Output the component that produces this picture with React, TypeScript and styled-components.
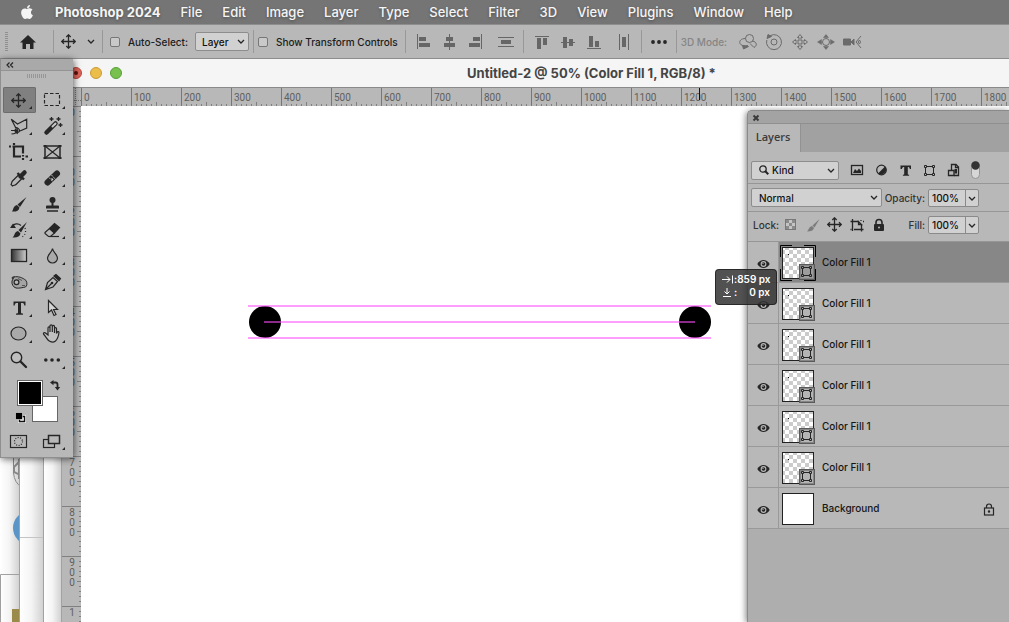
import React from "react";
import styled, { createGlobalStyle, css } from "styled-components";
import { FaApple } from "react-icons/fa";

const ink = "#262626";
const panel = "#b8b8b8";
const line = "#999999";

const GlobalStyle = createGlobalStyle`
  *, *::before, *::after { box-sizing: border-box; }
  body { margin: 0; background: #ffffff; }
  body, button, input, select { font-family: Inter, "Liberation Sans", sans-serif; }
  button { padding: 0; border: 0; background: none; color: inherit; }
  svg { display: block; overflow: visible; }
`;

const Shell = styled.div`
  height: 100vh;
  display: flex;
  flex-direction: column;
  overflow: hidden;
  color: ${ink};
  font-size: 10px;
  font-weight: 500;
`;

/* ---------- system menu bar ---------- */

const MenuBar = styled.nav`
  flex: none;
  height: 24px;
  display: flex;
  align-items: center;
  gap: 20px;
  padding-left: 19px;
  background: #757575;
  color: #f5f5f5;
  white-space: nowrap;
  overflow: hidden;
`;

const MenuItem = styled.button<{ $app?: boolean }>`
  flex: none;
  font-size: 13px;
  line-height: 20px;
  font-weight: ${(p) => (p.$app ? 700 : 500)};
  text-shadow: 0 1px 3px rgba(0, 0, 0, 0.35);
`;

/* ---------- options bar ---------- */

const OptionsBar = styled.div`
  flex: none;
  height: 35px;
  display: flex;
  align-items: center;
  padding-left: 5px;
  background: ${panel};
  border-top: 1px solid #8e8e8e;
  border-bottom: 1px solid #8c8c8c;
  white-space: nowrap;
  overflow: hidden;
`;

const BarGrip = styled.span`
  flex: none;
  width: 3px;
  height: 19px;
  background: repeating-linear-gradient(#8f8f8f 0 1px, transparent 1px 2px);
`;

const Separator = styled.span`
  flex: none;
  width: 1px;
  height: 23px;
  background: #989898;
`;

const IconButton = styled.button<{ $w: number; $tone?: string; $end?: number }>`
  flex: none;
  width: ${(p) => p.$w}px;
  height: 26px;
  padding-right: ${(p) => p.$end || 0}px;
  display: flex;
  align-items: center;
  justify-content: center;
  color: ${(p) => p.$tone || ink};
`;

const IconGroup = styled.div`
  display: flex;
  padding-left: 5px;
`;

const CheckLabel = styled.label<{ $left: number }>`
  flex: none;
  display: flex;
  align-items: center;
  gap: 8px;
  padding: 0 7px 0 ${(p) => p.$left}px;
  color: #1c1c1c;
`;

const CheckBox = styled.input`
  appearance: none;
  width: 10px;
  height: 10px;
  margin: 0;
  border: 1px solid #777777;
  border-radius: 2px;
  background: #c9c9c9;
`;

const DimLabel = styled.span`
  width: 58px;
  padding-left: 4px;
  color: #858585;
`;

const SelectWrap = styled.span<{ $w: number; $gap?: number }>`
  flex: none;
  width: ${(p) => p.$w}px;
  margin-right: ${(p) => p.$gap || 0}px;
  display: grid;
  align-items: center;
  > * { grid-area: 1 / 1; }
  > svg { justify-self: end; margin-right: 4px; pointer-events: none; }
  > svg.lead { justify-self: start; margin-left: 8px; }
`;

const Select = styled.select<{ $pad: number }>`
  appearance: none;
  width: 100%;
  height: 19px;
  padding: 0 0 0 ${(p) => p.$pad}px;
  border: 1px solid #8d8d8d;
  border-radius: 2px;
  background: #d1d1d1;
  color: #111111;
  font-size: 10px;
  font-weight: 500;
`;

/* ---------- workspace ---------- */

const Workspace = styled.main`
  flex: 1;
  min-height: 0;
  display: flex;
  position: relative;
`;

const BackWindow = styled.div<{ $w: number }>`
  flex: none;
  width: ${(p) => p.$w}px;
  overflow: hidden;
  border-right: 1px solid #a2a2a2;
  background: linear-gradient(to right, #ffffff, #f4f4f4 50%, #d2d2d2);
`;

const BackRule = styled.hr`
  margin: 478px 0 0;
  border: 0;
  border-top: 1px solid #c4c4c4;
`;

const DocumentWindow = styled.section`
  flex: 1;
  min-width: 0;
  display: flex;
  flex-direction: column;
`;

const TitleBar = styled.header`
  flex: none;
  height: 28px;
  display: flex;
  align-items: center;
  gap: 8px;
  padding-left: 8px;
  background: #f5f5f5;
`;

const Light = styled.button<{ $c: string; $edge: string }>`
  width: 12px;
  height: 12px;
  border-radius: 50%;
  border: 1px solid ${(p) => p.$edge};
  background: ${(p) => p.$c};
`;

const Title = styled.h1`
  flex: 1;
  margin: 0;
  padding-left: 44px;
  text-align: center;
  font-size: 13px;
  line-height: 20px;
  font-weight: 700;
  color: #444444;
  white-space: nowrap;
`;

const RulerRow = styled.div`
  flex: none;
  height: 19px;
  display: flex;
  overflow: hidden;
  border-top: 1px solid #8a8a8a;
  background: ${panel};
`;

const RulerCorner = styled.div`
  flex: none;
  width: 19px;
  background:
    repeating-linear-gradient(#777777 0 1px, transparent 1px 2px) 13px 0 / 1px 100% no-repeat,
    repeating-linear-gradient(to right, #777777 0 1px, transparent 1px 2px) 0 12px / 100% 1px no-repeat;
`;

const rulerText = css`
  font-family: Roboto, "Liberation Sans", sans-serif;
  font-size: 10px;
  font-weight: 400;
  color: #5f5f5f;
`;

const HRuler = styled.div`
  flex: 1;
  display: flex;
  position: relative;
  overflow: hidden;
  background:
    linear-gradient(to right, #777777 1px, transparent 1px) 0 0 / 50px 100% repeat-x,
    linear-gradient(to right, #808080 1px, transparent 1px) 0 100% / 5px 2px repeat-x,
    linear-gradient(to right, #808080 1px, transparent 1px) 0 100% / 25px 4px repeat-x;
`;

const HMark = styled.span`
  flex: none;
  width: 50px;
  padding: 4px 0 0 3px;
  line-height: 12px;
  ${rulerText}
`;

const CursorMark = styled.span`
  position: absolute;
  left: 618px;
  top: 0;
  width: 1px;
  height: 12px;
  background: #111111;
`;

const DocBody = styled.div`
  flex: 1;
  min-height: 0;
  display: flex;
`;

const VRuler = styled.div`
  flex: none;
  width: 19px;
  overflow: hidden;
  background:
    linear-gradient(#808080 1px, transparent 1px) 0 0 / 100% 50px repeat-y,
    linear-gradient(#808080 1px, transparent 1px) 100% 0 / 2px 5px repeat-y,
    linear-gradient(#808080 1px, transparent 1px) 100% 0 / 4px 25px repeat-y,
    ${panel};
`;

const VMark = styled.div`
  height: 50px;
  padding: 2px 0 0 1px;
  display: flex;
  flex-direction: column;
  align-items: center;
  line-height: 10px;
  ${rulerText}
`;

const Canvas = styled.div`
  flex: 1;
  position: relative;
  background: #ffffff;
`;

const Artwork = styled.svg`
  position: absolute;
  left: 167px;
  top: 199px;
`;

/* ---------- tools palette ---------- */

const Tools = styled.aside`
  position: absolute;
  left: 0;
  top: 0;
  width: 73px;
  background: ${panel};
  border-left: 1px solid #8f8f8f;
  border-bottom: 1px solid #8f8f8f;
  box-shadow: 1px 1px 7px rgba(0, 0, 0, 0.6);
`;

const ToolsHead = styled.div`
  height: 12px;
  display: flex;
  align-items: center;
  padding-left: 5px;
  background: #a9a9a9;
  border-bottom: 1px solid #939393;
`;

const ToolsGrip = styled.div`
  width: 20px;
  height: 4px;
  margin: 3px 0 9px 26px;
  background: repeating-linear-gradient(to right, #969696 0 1px, transparent 1px 2px);
`;

const ToolGrid = styled.div`
  display: grid;
  grid-template-columns: 33px 33px;
  padding-left: 2px;
`;

const Tool = styled.button<{ $on?: boolean; $more?: boolean }>`
  position: relative;
  height: 26px;
  display: flex;
  align-items: center;
  justify-content: center;
  border-radius: 2px;
  ${(p) => p.$on && css`background: #808080; box-shadow: inset 0 0 0 1px #6c6c6c;`}
  ${(p) =>
    p.$more &&
    css`
      &::after {
        content: "";
        position: absolute;
        right: 4px;
        bottom: 4px;
        border-bottom: 3px solid ${ink};
        border-left: 3px solid transparent;
      }
    `}
`;

const Swatches = styled.div`
  position: relative;
  height: 55px;
`;

const Swatch = styled.button<{ $c: string; $x: number; $y: number }>`
  position: absolute;
  left: ${(p) => p.$x}px;
  top: ${(p) => p.$y}px;
  width: 26px;
  height: 26px;
  border: 1px solid #666666;
  background: ${(p) => p.$c};
  box-shadow: inset 0 0 0 1px #ffffff;
`;

const SwatchIcon = styled.button<{ $x: number; $y: number }>`
  position: absolute;
  left: ${(p) => p.$x}px;
  top: ${(p) => p.$y}px;
`;

const ModeRow = styled(ToolGrid)`
  padding-bottom: 3px;
`;

/* ---------- layers palette ---------- */

const Layers = styled.aside`
  position: absolute;
  right: 0;
  top: 51px;
  bottom: 0;
  width: 262px;
  display: flex;
  flex-direction: column;
  background: #aeaeae;
  border-left: 1px solid #8a8a8a;
  border-top: 1px solid #8a8a8a;
  border-top-left-radius: 5px;
  box-shadow: -1px 1px 6px rgba(0, 0, 0, 0.5);
`;

const LayersHead = styled.div`
  flex: none;
  height: 13px;
  display: flex;
  align-items: center;
  padding: 1px 0 0 5px;
  background: #a3a3a3;
  border-bottom: 1px solid #8f8f8f;
  border-top-left-radius: 4px;
`;

const TabStrip = styled.div`
  flex: none;
  height: 28px;
  display: flex;
  background: #a1a1a1;
`;

const Tab = styled.button`
  width: 53px;
  padding: 0 2px 4px 0;
  border-right: 1px solid #929292;
  background: ${panel};
  font-family: "Open Sans", sans-serif;
  font-size: 11px;
  font-weight: 600;
  color: #3c3c3c;
`;

const PanelRow = styled.div<{ $h: number; $top?: number; $bottom?: number }>`
  flex: none;
  height: ${(p) => p.$h}px;
  display: flex;
  align-items: center;
  padding: ${(p) => p.$top || 0}px 30px ${(p) => p.$bottom || 0}px 3px;
  background: ${panel};
  border-bottom: 1px solid #969696;
`;

const IconStrip = styled.div<{ $left: number }>`
  display: flex;
  padding-left: ${(p) => p.$left}px;
`;

const Toggle = styled.button`
  width: 9px;
  height: 18px;
  margin-left: 6px;
  border-radius: 5px;
  border: 1px solid #949494;
  background: #d6d6d6;
  display: flex;
  justify-content: center;
  svg { flex: none; }
`;

const LockLabel = styled.span`
  width: 29px;
  padding-left: 2px;
  color: #333333;
`;

const Percent = styled.label`
  margin-left: auto;
  display: flex;
  align-items: center;
  gap: 3px;
  color: #333333;
`;

const PercentBox = styled.span`
  display: flex;
  width: 51px;
  height: 18px;
  border: 1px solid #8a8a8a;
  border-radius: 2px;
  background: #d1d1d1;
  input {
    width: 37px;
    padding: 0 0 0 3px;
    border: 0;
    border-right: 1px solid #8a8a8a;
    background: none;
    color: #111111;
    font-size: 10px;
    font-weight: 500;
  }
  svg { margin: 6px 0 0 2px; }
`;

const LayerList = styled.ul`
  flex: none;
  list-style: none;
  margin: 0;
  padding: 0;
`;

const LayerItem = styled.li<{ $on?: boolean }>`
  height: 41px;
  display: flex;
  align-items: center;
  border-bottom: 1px solid ${line};
  background: ${(p) => (p.$on ? "#878787" : panel)};
`;

const Eye = styled.button`
  width: 31px;
  height: 100%;
  padding-top: 3px;
  display: flex;
  align-items: center;
  justify-content: center;
  border-right: 1px solid ${line};
  background: ${panel};
`;

const LayerName = styled.span`
  flex: 1;
  padding-left: 7px;
  line-height: 14px;
  color: #151515;
`;

const LockSlot = styled.span`
  padding: 3px 14px 0 0;
`;

const Thumb = styled.svg`
  margin: 2px 0 0 2px;
`;

/* ---------- drag read-out ---------- */

const Readout = styled.div`
  position: absolute;
  left: 715px;
  top: 210px;
  width: 62px;
  padding: 3px 6px 5px 6px;
  border-radius: 4px;
  border: 1px solid rgba(25, 25, 25, 0.7);
  background: rgba(50, 50, 50, 0.85);
  color: #ffffff;
  line-height: 13px;
  font-weight: 600;
`;

const ReadoutLine = styled.div`
  display: flex;
  align-items: center;
  white-space: nowrap;
  span { margin-left: auto; }
`;

/* ---------- icons ---------- */

const Chevron = () => (
  <svg width="8" height="5" viewBox="0 0 8 5" fill="none" stroke={ink} strokeWidth="1.3">
    <path d="M1 1l3 3 3-3" />
  </svg>
);

const MovePath = () => (
  <g fill="none" stroke="currentColor" strokeWidth="1.3">
    <path d="M7.5 .8V14.2M.8 7.5H14.2" />
    <path d="M5.3 3L7.5 .8 9.7 3M5.3 12L7.5 14.2 9.7 12M3 5.3L.8 7.5 3 9.7M12 5.3L14.2 7.5 12 9.7" />
  </g>
);

const Frame = () => (
  <g fill="none" stroke={ink}>
    <path d="M2.5 4v5M10.5 4v5M4 2.5h5M4 10.5h5" />
    <path d="M1.5 1.5h2v2h-2zM9.5 1.5h2v2h-2zM1.5 9.5h2v2h-2zM9.5 9.5h2v2h-2z" />
  </g>
);

type IconDef = { label: string; w?: number; art: React.ReactNode };

const alignH: IconDef[] = [
  { label: "Align left edges", art: <><path d="M1.5 0v15" /><path d="M3 5h7M3 11h11" strokeWidth="4" /></> },
  { label: "Align horizontal centers", art: <><path d="M7.5 0v16" /><path d="M4 5h7M2 11h11" strokeWidth="4" /></> },
  { label: "Align right edges", art: <><path d="M13.5 0v15" /><path d="M5 5h7M1 11h11" strokeWidth="4" /></> },
  { label: "Distribute vertically", w: 34, art: <><path d="M0 3.5h16M0 12.5h16" /><path d="M3 8h10" strokeWidth="4" /></> },
];

const alignV: IconDef[] = [
  { label: "Align top edges", art: <><path d="M1 2.5h14" /><path d="M5 4v11M11 4v7" strokeWidth="4" /></> },
  { label: "Align vertical centers", art: <><path d="M1 8.5h14" /><path d="M5 3v11M11 5v7" strokeWidth="4" /></> },
  { label: "Align bottom edges", art: <><path d="M1 14.5h14" /><path d="M5 2v11M11 7v6" strokeWidth="4" /></> },
  { label: "Distribute horizontally", w: 34, art: <><path d="M3.5 0v16M12.5 0v16" /><path d="M8 3v10" strokeWidth="4" /></> },
];

const modes: IconDef[] = [
  {
    label: "Orbit the 3D camera",
    art: (
      <>
        <circle cx="10.5" cy="4.5" r="4" />
        <path d="M6.500 4.500C2 4.500 0 7 1 9.500c1 2 4 3 8 2M13.500 7c4.500 1 5 4.500 1.500 6.500l-4-4" />
        <path d="M3.500 11.500l6 1-5 2.500z" fill="currentColor" />
      </>
    ),
  },
  {
    label: "Roll the 3D camera",
    art: (
      <>
        <circle cx="9" cy="8" r="3" />
        <path d="M5 1.800A7.500 7.500 0 1 1 1.800 6" />
        <path d="M2 4.500l1-4 3.500 2z" fill="currentColor" />
      </>
    ),
  },
  {
    label: "Pan the 3D camera",
    art: (
      <path d="M9 .5L6.500 3.500H8V7H4.500V5.500L1.500 8l3 2.500V9H8v3.500H6.500L9 15.500l2.500-3H10V9h3.500v1.500l3-2.500-3-2.500V7H10V3.500h1.500z" />
    ),
  },
  {
    label: "Slide the 3D camera",
    art: (
      <>
        <circle cx="9" cy="8" r="3.5" />
        <path d="M6.500 3.500h5L9 .5zM6.500 12.500h5L9 15.500zM4.500 5.500v5L.5 8zM13.500 5.500v5L17.500 8z" fill="currentColor" strokeWidth="0.5" />
      </>
    ),
  },
  {
    label: "Zoom the 3D camera",
    art: (
      <>
        <path d="M.5 5h7v6h-7zM8 8l3-3v6z" fill="currentColor" />
        <path d="M18 2l-5 6 5 6M15 8l1.500-2 1 2-1 2z" />
      </>
    ),
  },
];

type ToolDef = { label: string; more?: boolean; on?: boolean; art: React.ReactNode };

const star = (x: number, y: number) => <path d={`M${x} ${y - 2}v4M${x - 2} ${y}h4`} strokeWidth="1.3" />;

const tools: ToolDef[] = [
  { label: "Move", more: true, on: true, art: <g transform="translate(2 3)"><MovePath /></g> },
  { label: "Rectangular Marquee", more: true, art: <rect x="2.5" y="3.5" width="15" height="12" strokeDasharray="3.5 2" /> },
  {
    label: "Polygonal Lasso",
    more: true,
    art: <path d="M7 12.300L2.300 3.300 8.500 8 17.700 3.300V12L11 15M6 12c2-1 5 1 4.500 3s-4 1.500-4.500 0 1.500-2.500 3-1.500M2 14.500h7M9 14c-1 2.500-3 4-6.500 4M6.500 14.500l2 3.500" />,
  },
  {
    label: "Magic Wand",
    more: true,
    art: (
      <>
        <path d="M4.500 16.500L13.500 7.500" strokeWidth="4.5" strokeLinecap="round" />
        <path d="M10.500 10.500L13.500 7.500" stroke="#c8c8c8" strokeWidth="2" strokeLinecap="round" />
        {star(9.5, 3)}{star(16.5, 3)}{star(18.5, 9)}
      </>
    ),
  },
  { label: "Crop", more: true, art: <path d="M0 4.500h2M3.500 4.500h10.500v7M14 13v1.500M14 16v2M5 1v2M5 4.500v10h7M16.500 14.500h2.500" strokeWidth="2.2" /> },
  { label: "Frame", art: <><rect x="3" y="4" width="15" height="12" strokeWidth="1.5" /><path d="M3 4l15 12M18 4L3 16" /><path d="M1.500 4h3M16.500 4h3M1.500 16h3M16.500 16h3" strokeWidth="2" /></> },
  {
    label: "Eyedropper",
    more: true,
    art: (
      <>
        <path d="M10 6.500L3.500 13c-1 1-.5 2-1.500 3.500l1.500 1.500C5 17 6 17.500 7 16.500L13.500 10" />
        <path d="M8.500 5l6.500 6.500" strokeWidth="2.4" />
        <path d="M11.500 8.500L15.500 4.500" strokeWidth="4.5" strokeLinecap="round" />
      </>
    ),
  },
  {
    label: "Spot Healing Brush",
    more: true,
    art: (
      <>
        <path d="M5.500 14.500L15 5.500" strokeWidth="6" strokeLinecap="round" />
        <path d="M7 9.500l4.500 5M9.500 7l4.500 5" stroke="#bcbcbc" strokeWidth="1" strokeDasharray="2 1" />
        <path d="M9.500 10.500l1.500 1.500" stroke="#d0d0d0" strokeWidth="1.5" />
      </>
    ),
  },
  {
    label: "Brush",
    more: true,
    art: <path d="M17.500 3L11 13l-2.500-2.500zM8 11l2.500 2.500C10 17 6.500 18 3 17.500 4.500 16 4 12 8 11z" fill={ink} stroke="none" />,
  },
  {
    label: "Clone Stamp",
    more: true,
    art: (
      <>
        <circle cx="10.5" cy="6" r="3" fill={ink} stroke="none" />
        <path d="M9.500 8h2v3.500H16q1 0 1 1V14.500H4v-2q0-1 1-1h4.500z" fill={ink} stroke="none" />
        <path d="M5 17h11" strokeWidth="1.5" />
      </>
    ),
  },
  {
    label: "History Brush",
    more: true,
    art: (
      <>
        <path d="M18 2L12 12.500 9.500 10zM9 11l2.500 2.500C11 16.500 8 18 3.500 17.500 6 16 5 12 9 11z" fill={ink} stroke="none" />
        <path d="M3 6.500c2-3 6-3.500 9-1" />
        <path d="M1 8l3-4.500L7 8z" fill={ink} stroke="none" />
        <path d="M16 8c1.500 4 0 8-4 9.500" strokeDasharray="1 2" />
      </>
    ),
  },
  {
    label: "Eraser",
    more: true,
    art: (
      <>
        <path d="M3 12.500L7.500 8.500 12.500 13 8.500 16.500H6.500L3 13.500z" />
        <path d="M7.500 8.500L12.500 3.500 17.500 7.500 12.500 13z" fill={ink} />
        <path d="M7 16.500h10" />
      </>
    ),
  },
  { label: "Gradient", more: true, art: <rect x="2.5" y="3.5" width="15" height="12" fill="url(#toolGradient)" strokeWidth="1.3" /> },
  { label: "Blur", more: true, art: <path d="M10.500 2.500C10 6 5.500 9 5.500 12a5 5 0 0 0 10 0C15.500 9 11 6 10.500 2.500z" fill="#aaaaaa" /> },
  {
    label: "Dodge",
    more: true,
    art: (
      <>
        <path d="M5 5C9 4 13.500 5.500 17 8.500c1.500 2.500 1 5.500-.5 6.500-3 .5-6 1.500-9.500 1C4 15 2.500 12 3 9z" fill="#a4a4a4" strokeWidth="1" />
        <path d="M3.500 7l-.5-1.500 2.500-1" strokeWidth="1" />
        <circle cx="7.5" cy="10.3" r="2.4" fill={panel} />
        <path d="M9 6.500l4 2M13 13.500h3" strokeWidth="1" stroke="#555555" />
      </>
    ),
  },
  {
    label: "Pen",
    more: true,
    art: (
      <>
        <path d="M3.500 17.500L5.500 10.500 11 5.500 15.500 9.500 11 15zM3.500 17.500L9.500 11.500" />
        <circle cx="10" cy="11" r="1.3" fill={ink} stroke="none" />
        <path d="M12 4L14 2.500 18.500 6.500 17 8.500z" fill={ink} />
      </>
    ),
  },
  {
    label: "Type",
    more: true,
    art: <path d="M4.500 3.500h12v4H15.300C15 5.500 14.500 5 13 5h-1v9.500c0 .7.5 1 2 1.100v1.200H7v-1.200c1.500-.1 2-.4 2-1.100V5H8C6.500 5 6 5.500 5.700 7.500H4.500z" fill={ink} stroke="none" />,
  },
  { label: "Path Selection", more: true, art: <path d="M6.500 2.500V14.500L9.500 12l2.500 5.500 2-1L11.500 11.500H15.500z" fill="#d4d4d4" /> },
  { label: "Ellipse", more: true, art: <ellipse cx="9.5" cy="9.5" rx="7.5" ry="6.5" fill="#a9a9a9" /> },
  {
    label: "Hand",
    more: true,
    art: (
      <path
        d="M6.500 16.500C4 14 3 11.500 1.500 10c-.5-1 1-1.800 2-1l2.500 2V4c0-1.500 2-1.500 2 0v4V2c0-1.500 2.300-1.500 2.300 0v6V2.500c0-1.400 2.200-1.400 2.200 0V9 4.500c0-1.300 2-1.300 2 0V9.500c.5-2 2.500-2.500 2.500-1-.5 4-1 6-3.500 8.500C11.500 18.500 8.500 18 6.500 16.500z"
        fill="#c0c0c0"
      />
    ),
  },
  { label: "Zoom", art: <><circle cx="7.5" cy="7.5" r="5.2" fill="#bfbfbf" strokeWidth="1.4" /><path d="M11.500 11.500L17 17" strokeWidth="2.4" strokeLinecap="round" /></> },
  {
    label: "Edit Toolbar",
    more: true,
    art: <g fill={ink} stroke="none"><circle cx="3.8" cy="10" r="1.8" /><circle cx="10" cy="10" r="1.8" /><circle cx="16.3" cy="10" r="1.8" /></g>,
  },
];

const ToolArt = ({ children }: { children: React.ReactNode }) => (
  <svg width="21" height="20" viewBox="0 0 21 20" fill="none" stroke={ink} strokeWidth="1.2">
    {children}
  </svg>
);

const filters: IconDef[] = [
  {
    label: "Pixel layers",
    art: <><rect x="1.5" y="2.5" width="11" height="9" stroke={ink} strokeWidth="1.3" fill="none" /><path d="M3 10l2-4L7 8l2-2.500L11 8v2z" fill={ink} /></>,
  },
  {
    label: "Adjustment layers",
    art: <><circle cx="7.5" cy="7" r="4.8" fill="none" stroke={ink} strokeWidth="1.2" /><path d="M11 3.500A5 5 0 0 1 4 10.500z" fill={ink} /></>,
  },
  {
    label: "Type layers",
    art: <path d="M2.500 2.500H13v3.500h-1.200c-.2-1.500-.6-2-2-2v7c0 .5.4.7 1.300.8v.9H4.900v-.9c.9-.1 1.300-.3 1.300-.8V4c-1.400 0-2 .5-2.300 2H2.500z" fill={ink} />,
  },
  { label: "Shape layers", art: <g transform="translate(1 1)"><Frame /></g> },
  {
    label: "Smart objects",
    art: (
      <g fill="none" stroke={ink} strokeWidth="1.3">
        <path d="M5.500 7V1.500H10L12.500 4v8.500H8" />
        <path d="M2.500 7.500h5.500v5H2.500z" />
        <path d="M9.500 1.500V4.500h3" />
        <path d="M8.500 6h2.500v4.500H8.500z" fill={ink} stroke="none" />
      </g>
    ),
  },
];

const locks: IconDef[] = [
  {
    label: "Lock transparent pixels",
    art: <><rect x="1.5" y="1.5" width="10" height="10" fill="#c4c4c4" stroke="#777777" /><path d="M2 2h3v3H2zM8 2h3v3H8zM5 5h3v3H5zM2 8h3v3H2zM8 8h3v3H8z" fill="#8b8b8b" /></>,
  },
  {
    label: "Lock image pixels",
    art: <path d="M13.500 1L8.500 9.500 6.500 7.500zM6 8l2 2c-.5 2.500-3 3.500-7 3.500C3 12 2.500 9 6 8z" fill="#7b7b7b" />,
  },
  { label: "Lock position", art: <g transform="translate(-1 -1)"><MovePath /></g> },
  {
    label: "Prevent auto-nesting",
    art: <path d="M2.500 1v12M.5 3.500h8M4 11.500h9.500M11.500 6v7.500M8.500 3.500v3h3zM11 2v1M13 3.500h1M.5 11.500h1" fill="none" stroke={ink} strokeWidth="1.3" />,
  },
  {
    label: "Lock all",
    art: <><path d="M4 6V4.500a3 3 0 0 1 6 0V6" fill="none" stroke={ink} strokeWidth="1.6" /><rect x="2" y="6" width="10" height="7" rx="1" fill={ink} /><circle cx="7" cy="9.5" r="1" fill={panel} /></>,
  },
];

const SmallIcon = ({ children }: { children: React.ReactNode }) => (
  <svg width="14" height="14" viewBox="0 0 14 14">{children}</svg>
);

const EyeIcon = () => (
  <svg width="13" height="10" viewBox="0 0 13 10">
    <path d="M.3 5C3.200-.3 9.800-.3 12.700 5 9.800 10.300 3.200 10.300.3 5z" fill={ink} />
    <circle cx="6.5" cy="5" r="2.9" fill={panel} />
    <circle cx="6.5" cy="5" r="1.8" fill={ink} />
    <circle cx="6" cy="4.4" r=".6" fill={panel} />
  </svg>
);

const LayerThumb = ({ fill, selected }: { fill: boolean; selected?: boolean }) => (
  <Thumb width="34" height="34" viewBox="0 0 34 34">
    <rect x="1.5" y="1.5" width="31" height="31" fill={fill ? "url(#checker)" : "#ffffff"} stroke="#222222" />
    {fill && (
      <>
        <rect x="7" y="8" width="1" height="1" />
        <rect x="18.5" y="18.5" width="15" height="15" fill={selected ? "#9c9c9c" : "#b4b4b4"} stroke="#5a5a5a" />
        <rect x="19.5" y="19.5" width="13" height="13" fill="none" stroke="#858585" />
        <g transform="translate(19 19)"><Frame /></g>
      </>
    )}
    {selected && (
      <path d="M-.5 11V-.5H11M23 -.5H34.500V11M34.500 23V34.500H23M11 34.500H-.5V23" fill="none" stroke="#000000" />
    )}
  </Thumb>
);

const menus = ["File", "Edit", "Image", "Layer", "Type", "Select", "Filter", "3D", "View", "Plugins", "Window", "Help"];

const layers = [
  ...Array.from({ length: 6 }, (_, i) => ({ name: "Color Fill 1", fill: true, selected: i === 0 })),
  { name: "Background", fill: false, selected: false },
];

const Defs = () => (
  <svg width="0" height="0" aria-hidden="true">
    <defs>
      <linearGradient id="toolGradient">
        <stop offset="0" stopColor="#333333" />
        <stop offset="1" stopColor="#d0d0d0" />
      </linearGradient>
      <pattern id="checker" width="8" height="8" patternUnits="userSpaceOnUse">
        <path d="M0 0h8v8H0z" fill="#ffffff" />
        <path d="M4 0h4v4H4zM0 4h4v4H0z" fill="#cbcbcb" />
      </pattern>
    </defs>
  </svg>
);

const PercentField = ({ label }: { label: string }) => (
  <Percent>
    {label}
    <PercentBox>
      <input type="text" defaultValue="100%" />
      <Chevron />
    </PercentBox>
  </Percent>
);

const AlignGroup = ({ items }: { items: IconDef[] }) => (
  <>
    <IconGroup>
      {items.map((a) => (
        <IconButton key={a.label} $w={a.w || 26} aria-label={a.label}>
          <svg width="16" height="16" viewBox="0 0 16 16" fill="none" stroke="#666666">{a.art}</svg>
        </IconButton>
      ))}
    </IconGroup>
    <Separator />
  </>
);

export default function App() {
  return (
    <Shell>
      <GlobalStyle />
      <Defs />
      <MenuBar>
        <FaApple size={16} />
        <MenuItem $app>Photoshop 2024</MenuItem>
        {menus.map((m) => <MenuItem key={m}>{m}</MenuItem>)}
      </MenuBar>

      <OptionsBar>
        <BarGrip />
        <IconButton $w={45} $end={5} aria-label="Home">
          <svg width="16" height="14" viewBox="0 0 16 14"><path d="M8 0l8 7.500h-2.500V14H10V9H6v5H2.500V7.500H0z" fill={ink} /></svg>
        </IconButton>
        <Separator />
        <IconButton $w={29} aria-label="Move tool">
          <svg width="15" height="15" viewBox="0 0 15 15"><MovePath /></svg>
        </IconButton>
        <IconButton $w={19} $end={4} aria-label="Tool presets"><Chevron /></IconButton>
        <Separator />
        <CheckLabel $left={7}><CheckBox type="checkbox" />Auto-Select:</CheckLabel>
        <SelectWrap $w={54} $gap={4}>
          <Select $pad={6} aria-label="Auto-select target"><option>Layer</option></Select>
          <Chevron />
        </SelectWrap>
        <Separator />
        <CheckLabel $left={4}><CheckBox type="checkbox" />Show Transform Controls</CheckLabel>
        <Separator />
        <AlignGroup items={alignH} />
        <AlignGroup items={alignV} />
        <IconButton $w={34} aria-label="More options">
          <svg width="16" height="4" viewBox="0 0 16 4" fill={ink}>
            <circle cx="2" cy="2" r="1.9" /><circle cx="8" cy="2" r="1.9" /><circle cx="14" cy="2" r="1.9" />
          </svg>
        </IconButton>
        <Separator />
        <DimLabel>3D Mode:</DimLabel>
        {modes.map((m) => (
          <IconButton key={m.label} $w={26} $tone="#6b6b6b" aria-label={m.label}>
            <svg width="18" height="16" viewBox="0 0 18 16" fill="none" stroke="currentColor">{m.art}</svg>
          </IconButton>
        ))}
      </OptionsBar>

      <Workspace>
        <BackWindow $w={20}>
          <svg width="20" height="563" viewBox="0 0 20 563">
            <g fill="none" stroke="#888888">
              <path d="M13.500 396v18q1 10 8 14" />
              <path d="M20 402l-6 6v5l6 3M19 400v20" strokeWidth="2" />
            </g>
            <circle cx="30" cy="469" r="17" fill="#5b94c6" />
            <path d="M.5 563V515.500H20" fill="none" stroke="#a0a0a0" />
            <path d="M12 550h8v13h-8z" fill="#9a8b4d" />
          </svg>
        </BackWindow>
        <BackWindow $w={24}><BackRule /></BackWindow>
        <BackWindow $w={18} />

        <DocumentWindow>
          <TitleBar>
            <Light $c="#e0665a" $edge="#b9473f" aria-label="Close">
              <svg width="10" height="10" viewBox="0 0 10 10"><circle cx="5" cy="5" r="2" fill="#5e100b" /></svg>
            </Light>
            <Light $c="#ebbd4b" $edge="#cb9b35" aria-label="Minimize" />
            <Light $c="#78c14e" $edge="#57a037" aria-label="Zoom" />
            <Title>Untitled-2 @ 50% (Color Fill 1, RGB/8) *</Title>
          </TitleBar>
          <RulerRow>
            <RulerCorner />
            <HRuler>
              {Array.from({ length: 19 }, (_, i) => <HMark key={i}>{i * 100}</HMark>)}
              <CursorMark />
            </HRuler>
          </RulerRow>
          <DocBody>
            <VRuler>
              {Array.from({ length: 11 }, (_, i) => (
                <VMark key={i}>
                  {String(i * 100).split("").slice(0, i === 10 ? 1 : 3).map((d, k) => <span key={k}>{d}</span>)}
                </VMark>
              ))}
            </VRuler>
            <Canvas>
              <Artwork width="463" height="34" viewBox="0 0 463 34">
                <circle cx="17" cy="17" r="16" />
                <circle cx="447" cy="17" r="16" />
                <path d="M0 0h463v2H0zM16 16h431v2H16zM0 32h463v2H0z" fill="#ff4cff" fillOpacity="0.55" />
              </Artwork>
            </Canvas>
          </DocBody>
        </DocumentWindow>

        <Tools aria-label="Tools">
          <ToolsHead>
            <svg width="8" height="6" viewBox="0 0 8 6" fill="none" stroke={ink} strokeWidth="1.2"><path d="M3.500 .5L1 3l2.500 2.500M7 .5L4.500 3 7 5.500" /></svg>
          </ToolsHead>
          <ToolsGrip />
          <ToolGrid>
            {tools.map((t) => (
              <Tool key={t.label} $on={t.on} $more={t.more} aria-label={t.label}><ToolArt>{t.art}</ToolArt></Tool>
            ))}
          </ToolGrid>
          <Swatches>
            <Swatch $c="#ffffff" $x={31} $y={23} aria-label="Background color" />
            <Swatch $c="#000000" $x={16} $y={7} aria-label="Foreground color" />
            <SwatchIcon $x={48} $y={7} aria-label="Swap colors">
              <svg width="12" height="11" viewBox="0 0 12 11">
                <path d="M4 2.500h2.500q2 0 2 2V8" fill="none" stroke={ink} strokeWidth="1.8" />
                <path d="M4.500 0v5.200L1 2.600zM5.800 7h5.400L8.500 10.500z" fill={ink} />
              </svg>
            </SwatchIcon>
            <SwatchIcon $x={14} $y={39} aria-label="Default colors">
              <svg width="11" height="11" viewBox="0 0 11 11">
                <path d="M4 4h6v6H4z" fill="#ffffff" stroke="#ececec" strokeWidth="2" />
                <path d="M4.500 4.500h5v5h-5z" fill="#ffffff" stroke="#111111" strokeWidth="1.4" />
                <path d="M.5 .5h7v7h-7z" stroke="#ececec" strokeWidth=".6" />
              </svg>
            </SwatchIcon>
          </Swatches>
          <ModeRow>
            <Tool aria-label="Quick mask">
              <ToolArt><rect x="1.5" y="4.5" width="16" height="12" /><circle cx="9.5" cy="10.5" r="4" strokeDasharray="1 1.5" /></ToolArt>
            </Tool>
            <Tool $more aria-label="Screen mode">
              <ToolArt><rect x="1.5" y="8.5" width="11" height="8" /><rect x="6.5" y="4.5" width="11" height="8" fill={panel} strokeWidth="1.5" /></ToolArt>
            </Tool>
          </ModeRow>
        </Tools>

        <Layers aria-label="Layers">
          <LayersHead>
            <svg width="6" height="6" viewBox="0 0 6 6"><path d="M.5 .5l5 5M5.500 .5l-5 5" stroke="#3a3a3a" strokeWidth="2" /></svg>
          </LayersHead>
          <TabStrip><Tab>Layers</Tab></TabStrip>
          <PanelRow $h={32} $top={5}>
            <SelectWrap $w={88}>
              <Select $pad={20} aria-label="Filter by"><option>Kind</option></Select>
              <svg className="lead" width="10" height="10" viewBox="0 0 10 10" fill="none" stroke={ink}>
                <circle cx="4" cy="4" r="3.2" strokeWidth="1.3" />
                <path d="M6.300 6.300l3 3" strokeWidth="2" />
              </svg>
              <Chevron />
            </SelectWrap>
            <IconStrip $left={6}>
              {filters.map((f) => (
                <IconButton key={f.label} $w={24} aria-label={f.label}><SmallIcon>{f.art}</SmallIcon></IconButton>
              ))}
            </IconStrip>
            <Toggle aria-label="Layer filtering">
              <svg width="9" height="9" viewBox="0 0 9 9"><circle cx="4.5" cy="3.5" r="4.2" fill="#333333" /></svg>
            </Toggle>
          </PanelRow>
          <PanelRow $h={28}>
            <SelectWrap $w={131}>
              <Select $pad={7} aria-label="Blend mode"><option>Normal</option></Select>
              <Chevron />
            </SelectWrap>
            <PercentField label="Opacity:" />
          </PanelRow>
          <PanelRow $h={30} $bottom={3}>
            <LockLabel>Lock:</LockLabel>
            <IconStrip $left={0}>
              {locks.map((l) => (
                <IconButton key={l.label} $w={22} aria-label={l.label}><SmallIcon>{l.art}</SmallIcon></IconButton>
              ))}
            </IconStrip>
            <PercentField label="Fill:" />
          </PanelRow>
          <LayerList>
            {layers.map((l, i) => (
              <LayerItem key={i} $on={l.selected}>
                <Eye aria-label="Toggle visibility"><EyeIcon /></Eye>
                <LayerThumb fill={l.fill} selected={l.selected} />
                <LayerName>{l.name}</LayerName>
                {!l.fill && (
                  <LockSlot>
                    <svg width="12" height="13" viewBox="0 0 12 13" fill="none" stroke={ink} strokeWidth="1.2">
                      <rect x="1.5" y="5" width="9" height="7" />
                      <path d="M3.500 5V3.500a2.500 2.500 0 0 1 5 0V5" />
                      <circle cx="6" cy="8.5" r=".6" />
                    </svg>
                  </LockSlot>
                )}
              </LayerItem>
            ))}
          </LayerList>
        </Layers>

        <Readout>
          <ReadoutLine>
            <svg width="12" height="9" viewBox="0 0 12 9" fill="none" stroke="#ffffff"><path d="M0 4.500h8M5 1.500l3 3-3 3M10.500 .5v8" /></svg>
            :<span>859 px</span>
          </ReadoutLine>
          <ReadoutLine>
            <svg width="12" height="9" viewBox="0 0 12 9" fill="none" stroke="#ffffff"><path d="M5 0v6M2.500 3.500L5 6l2.500-2.500M1 8.500h8" /></svg>
            :<span>0 px</span>
          </ReadoutLine>
        </Readout>
      </Workspace>
    </Shell>
  );
}
